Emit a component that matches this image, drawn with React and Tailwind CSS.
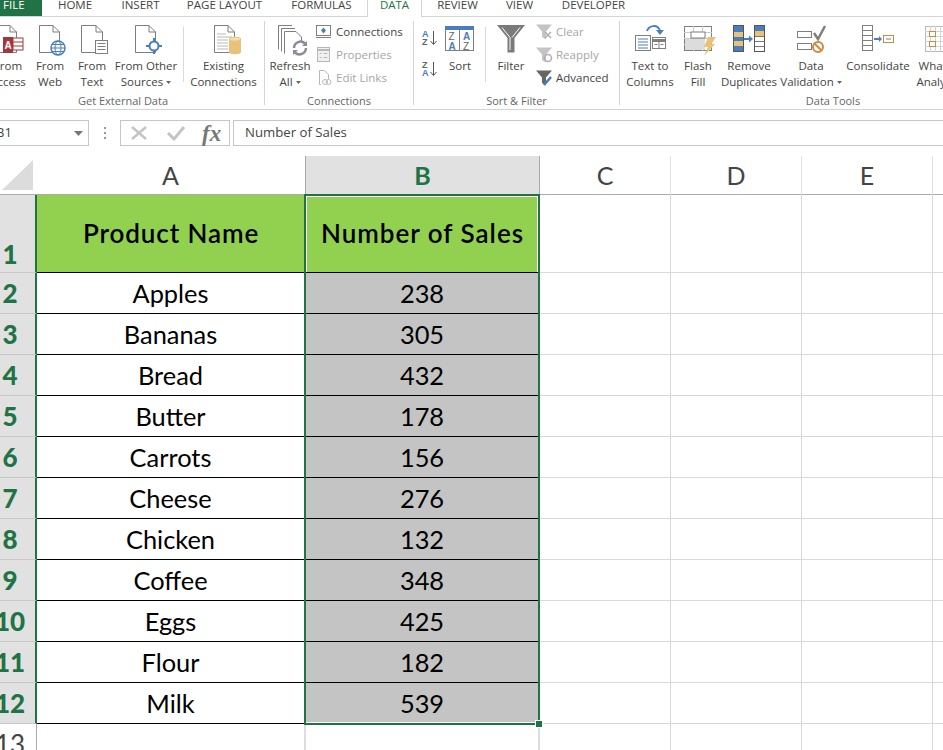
const BLUE = '#4a7ebb';
const GREY = '#7f7f7f';
const FAINT = '#b8b8b8';
const GOLD = '#e9c27a';
const ORANGE = '#d08a3e';

const TABS = [
  ['HOME', 'w-[66px]'],
  ['INSERT', 'w-[65px]'],
  ['PAGE LAYOUT', 'w-[103px]'],
  ['FORMULAS', 'w-[91px]'],
];
const TABS_AFTER = [
  ['REVIEW', 'w-[71px]'],
  ['VIEW', 'w-[53px]'],
  ['DEVELOPER', 'w-[95px]'],
];

const ROWS = [
  ['Apples', 238],
  ['Bananas', 305],
  ['Bread', 432],
  ['Butter', 178],
  ['Carrots', 156],
  ['Cheese', 276],
  ['Chicken', 132],
  ['Coffee', 348],
  ['Eggs', 425],
  ['Flour', 182],
  ['Milk', 539],
];

const GRID = 'grid grid-cols-[37px_269px_234px_131px_131px_131px_131px_131px]';
const cellFont = "[font-family:Lato,'Liberation_Sans',sans-serif]";

const Svg = ({ children, w = 44, h = 32 }) => (
  <svg width={w} height={h} viewBox={`0 0 ${w} ${h}`} fill="none" className="block shrink-0">
    {children}
  </svg>
);

const Doc = ({ x, w = 21, stroke = GREY }) => (
  <path
    d={`M${x + 0.5} 1.5H${x + w - 7}L${x + w - 0.5} 8V28.5H${x + 0.5}ZM${x + w - 7} 1.5V8H${x + w - 0.5}`}
    stroke={stroke}
    fill="#fff"
  />
);

const AccessIcon = () => (
  <Svg>
    <Doc x={12} w={19} />
    <rect x="17" y="13" width="10" height="16" fill="#a4373a" />
    <rect x="27" y="14" width="10" height="12" fill="#fff" stroke="#a4373a" />
    <path d="M27 18H37M27 22H37" stroke="#a4373a" />
    <text x="18.5" y="25" fontSize="10" fontWeight="700" fill="#fff" fontFamily="Liberation Sans">A</text>
  </Svg>
);

const WebIcon = () => (
  <Svg>
    <Doc x={11} />
    <circle cx="30" cy="24" r="7" fill="#fff" stroke={BLUE} strokeWidth="1.5" />
    <ellipse cx="30" cy="24" rx="3" ry="7" stroke={BLUE} />
    <path d="M23 24H37M24 20.5H36M24 27.5H36" stroke={BLUE} />
  </Svg>
);

const TextIcon = () => (
  <Svg>
    <Doc x={11} w={22} />
    <rect x="25.5" y="16.5" width="12" height="13" fill="#fff" stroke={GREY} />
    <path d="M27.5 19.5H35.5M27.5 22.5H35.5M27.5 25.5H35.5" stroke={GREY} />
  </Svg>
);

const OtherIcon = () => (
  <Svg>
    <Doc x={11} />
    <circle cx="30" cy="22" r="4.5" fill="#fff" stroke={BLUE} strokeWidth="2" />
    <path d="M30 14V17M30 27V30M22 22H25M35 22H38" stroke={BLUE} strokeWidth="2" />
  </Svg>
);

const ExistingIcon = () => (
  <Svg>
    <Doc x={12} />
    <path d="M15 10H24M15 13H30M15 16H26M15 19H26M15 22H26M15 25H26" stroke={FAINT} />
    <path d="M27 15C27 12 39 12 39 15V28C39 31 27 31 27 28Z" fill={GOLD} />
    <ellipse cx="33" cy="15" rx="5" ry="1.5" fill="#f4dfb4" />
  </Svg>
);

const RefreshIcon = () => (
  <Svg>
    <path d="M10.5 25.5V1.5H24" stroke={GREY} />
    <path d="M13.5 27.5V4.5H27" stroke={GREY} />
    <path d="M16.5 29.5V7.5H28L33.5 13V18" stroke={GREY} fill="#fff" />
    <path d="M26 24A6.5 6.5 0 0 1 37 19.5" stroke="#8b8b9b" strokeWidth="2.5" />
    <path d="M38 24A6.5 6.5 0 0 1 27 28.5" stroke="#8b8b9b" strokeWidth="2.5" />
    <path d="M34 22H39V17ZM30 26H25V31Z" fill="#8b8b9b" />
  </Svg>
);

const ConnectionsIcon = () => (
  <Svg w={16} h={16}>
    <rect x="0.5" y="1.5" width="14" height="10" fill="#fff" stroke={GREY} />
    <path d="M0 13.5H15" stroke={GREY} />
    <path d="M7.5 3.5L10 6.5L7.5 9.5L5 6.5Z" fill={BLUE} />
  </Svg>
);

const PropertiesIcon = () => (
  <Svg w={16} h={16}>
    <rect x="1.5" y="0.5" width="12" height="14" fill="#f1f1f1" stroke={FAINT} />
    <path d="M1.5 3H13.5" stroke={FAINT} strokeWidth="2" />
    <path d="M3.5 6.5H5.5M7.5 6.5H11.5M3.5 10.5H5.5M7.5 10.5H11.5" stroke={FAINT} />
  </Svg>
);

const EditLinksIcon = () => (
  <Svg w={16} h={16}>
    <path d="M3.5 0.5H8.5L12.5 4.5V9M5 14.5H3.5V0.5" stroke={FAINT} />
    <circle cx="9" cy="12" r="2.5" stroke={FAINT} />
    <circle cx="12.5" cy="12" r="2.5" stroke={FAINT} />
  </Svg>
);

const SortSmall = ({ top, bottom, topFill, bottomFill }) => (
  <Svg w={16} h={16}>
    <text x="0" y="7" fontSize="9" fontWeight="700" fill={topFill} fontFamily="Liberation Sans">{top}</text>
    <text x="0" y="15" fontSize="9" fontWeight="700" fill={bottomFill} fontFamily="Liberation Sans">{bottom}</text>
    <path d="M11.5 1V14M8.5 11L11.5 14.5L14.5 11" stroke="#555" />
  </Svg>
);

const SortBig = () => (
  <Svg w={30} h={26}>
    <rect x="0.5" y="3.5" width="28" height="21" fill="#fff" stroke={GREY} />
    <rect x="0" y="0" width="29" height="4" fill={BLUE} />
    <path d="M14.5 4V25" stroke={GREY} />
    <text x="3.5" y="13.5" fontSize="10" fill="#666" fontFamily="Liberation Sans">Z</text>
    <text x="3.5" y="23.5" fontSize="10" fontWeight="700" fill={BLUE} fontFamily="Liberation Sans">A</text>
    <text x="18" y="13.5" fontSize="10" fontWeight="700" fill={BLUE} fontFamily="Liberation Sans">A</text>
    <text x="18" y="23.5" fontSize="10" fill="#666" fontFamily="Liberation Sans">Z</text>
  </Svg>
);

const FilterBig = () => (
  <Svg w={28} h={28}>
    <path d="M0 0H28L17.5 13V27.5H10.5V13Z" fill="#7a7a7a" />
    <path d="M5 2.5L13 12.5V25M23 2.5L15 12.5" stroke="#fff" />
  </Svg>
);

const FilterSmall = ({ fill, children }) => (
  <Svg w={18} h={16}>
    <path d="M0 0.5H16L10 7.5V15.5L6 13V7.5Z" fill={fill} />
    {children}
  </Svg>
);

const TextColumnsIcon = () => (
  <Svg>
    <rect x="7.5" y="11.5" width="15" height="15" fill="#fff" stroke={GREY} />
    <path d="M10 15H20M10 18H20M10 21H20M10 24H20" stroke={BLUE} />
    <rect x="24.5" y="13.5" width="13" height="11" fill="#fff" stroke={GREY} />
    <path d="M24 16.5H38" stroke={GREY} strokeWidth="3" />
    <path d="M31 17V24M26.5 20.5H29.5M32.5 20.5H35.5" stroke={GREY} />
    <path d="M19 7C21 1 30 0 32 7" stroke={BLUE} strokeWidth="2" />
    <path d="M28 6H36L32 11Z" fill={BLUE} />
  </Svg>
);

const FlashIcon = () => (
  <Svg>
    <rect x="8.5" y="2.5" width="27" height="24" fill="#fff" stroke={GREY} />
    <path d="M8 8.5H36M8 14.5H36M8 20.5H36M17.5 2V27M26.5 2V27" stroke="#c9c9c9" />
    <rect x="15" y="8" width="14" height="6" fill="#fff" stroke={GREY} />
    <rect x="9" y="15" width="20" height="11" fill="#dcdcdc" />
    <path d="M32 13H40L35.5 20H39L28 32L32 23H28Z" fill={GOLD} />
  </Svg>
);

const DuplicatesIcon = () => (
  <Svg>
    <rect x="6.5" y="1.5" width="10" height="26" fill={BLUE} stroke="#555" />
    <path d="M7 8H16V13H7ZM7 17H16V22H7Z" fill={GOLD} />
    <path d="M17 15H23" stroke={BLUE} strokeWidth="2" />
    <path d="M22 11.5L26 15L22 18.5Z" fill={BLUE} />
    <rect x="27.5" y="1.5" width="10" height="26" fill="#fff" stroke="#555" />
    <rect x="28" y="2" width="9" height="5" fill={BLUE} />
    <rect x="28" y="7" width="9" height="5" fill={GOLD} />
    <path d="M28 12.5H37M28 17.5H37M28 22.5H37" stroke="#777" />
  </Svg>
);

const ValidationIcon = () => (
  <Svg>
    <rect x="8.5" y="7.5" width="14" height="6" fill="#fff" stroke={GREY} />
    <rect x="8.5" y="19.5" width="14" height="6" fill="#fff" stroke={GREY} />
    <path d="M25 9L29 15L36 2" stroke={GREY} strokeWidth="2.5" />
    <circle cx="29" cy="23" r="5" fill="#fff" stroke={ORANGE} strokeWidth="2" />
    <path d="M25.5 19.5L32.5 26.5" stroke={ORANGE} strokeWidth="2" />
  </Svg>
);

const ConsolidateIcon = () => (
  <Svg>
    <rect x="6.5" y="1.5" width="10" height="25" fill="#fff" stroke={GREY} />
    <path d="M7 6.5H16M7 11.5H16M7 16.5H16M7 21.5H16" stroke={GREY} />
    <path d="M18 15H24" stroke={BLUE} strokeWidth="2" />
    <path d="M23 12L26 15L23 18Z" fill={BLUE} />
    <rect x="27.5" y="11.5" width="10" height="7" fill="#fff" stroke={ORANGE} />
    <path d="M30 15H35" stroke={GREY} />
  </Svg>
);

const WhatIfIcon = () => (
  <Svg>
    <rect x="9.5" y="2.5" width="24" height="25" fill="#fff" stroke={FAINT} />
    <path d="M14.5 2V28M19.5 2V28M24.5 2V28M29.5 2V28M9 7.5H34M9 12.5H34M9 17.5H34M9 22.5H34" stroke="#d4d4d4" />
    <rect x="13.5" y="7.5" width="6" height="5" fill="#fff" stroke={ORANGE} />
    <rect x="13.5" y="17.5" width="6" height="5" fill="#fff" stroke={ORANGE} />
  </Svg>
);

const Caret = () => (
  <svg width="5" height="3" viewBox="0 0 5 3" className="ml-[3px] inline-block align-middle">
    <path d="M0 0H5L2.5 3Z" fill="#666" />
  </svg>
);

const BigButton = ({ icon, lines, width, caret }) => (
  <div className={`flex flex-col items-center shrink-0 ${width}`}>
    <div className="h-[32px] mb-[2px] flex justify-center">{icon}</div>
    {lines.map((line, i) => (
      <div key={line} className="h-4 leading-4 whitespace-nowrap">
        {line}
        {caret && i === lines.length - 1 && <Caret />}
      </div>
    ))}
  </div>
);

const SmallRow = ({ icon, label, muted }) => (
  <div className={`h-[23px] flex items-center gap-[3px] whitespace-nowrap ${muted ? 'text-[#a6a6a6]' : ''}`}>
    <div className="w-[17px] shrink-0">{icon}</div>
    {label}
  </div>
);

const Group = ({ label, className, children }) => (
  <div className={`flex flex-col justify-between h-[92px] shrink-0 ${className}`}>
    <div className="flex pt-[7px]">{children}</div>
    <div className="h-4 leading-4 text-center text-[11px] text-[#666]">{label}</div>
  </div>
);

const Separator = () => <div className="w-px h-[84px] mt-[4px] bg-[#d4d4d4] shrink-0" />;

const Ribbon = () => (
  <div className="flex h-[92px] -ml-[18px] border-b border-[#d4d4d4] box-content text-[#444] text-[11.5px]">
    <Group label="Get External Data" className="w-[282px]">
      <BigButton icon={<AccessIcon />} lines={['From', 'Access']} width="w-[52px]" />
      <BigButton icon={<WebIcon />} lines={['From', 'Web']} width="w-[32px]" />
      <BigButton icon={<TextIcon />} lines={['From', 'Text']} width="w-[52px]" />
      <BigButton icon={<OtherIcon />} lines={['From Other', 'Sources']} width="w-[56px]" caret />
      <div className="w-px h-[55px] ml-[9px] mt-[3px] bg-[#d9d9d9] shrink-0" />
      <BigButton icon={<ExistingIcon />} lines={['Existing', 'Connections']} width="w-[79px]" />
    </Group>
    <Separator />
    <Group label="Connections" className="w-[148px]">
      <BigButton icon={<RefreshIcon />} lines={['Refresh', 'All']} width="w-[50px]" caret />
      <div className="flex flex-col -mt-[4px] ml-[1px]">
        <SmallRow icon={<ConnectionsIcon />} label="Connections" />
        <SmallRow icon={<PropertiesIcon />} label="Properties" muted />
        <SmallRow icon={<EditLinksIcon />} label="Edit Links" muted />
      </div>
    </Group>
    <Separator />
    <Group label="Sort & Filter" className="w-[205px]">
      <div className="flex flex-col gap-[15px] ml-[8px] pt-[6px] w-[23px] shrink-0">
        <SortSmall top="A" bottom="Z" topFill={BLUE} bottomFill="#666" />
        <SortSmall top="Z" bottom="A" topFill="#666" bottomFill={BLUE} />
      </div>
      <div className="flex flex-col items-center w-[30px] shrink-0">
        <div className="h-[32px] mb-[2px] pt-[2px]"><SortBig /></div>
        <div className="h-4 leading-4">Sort</div>
      </div>
      <div className="w-px h-[55px] ml-[10px] mt-[3px] bg-[#d9d9d9] shrink-0" />
      <div className="flex flex-col items-center w-[50px] shrink-0">
        <div className="h-[32px] mb-[2px] pt-[1px]"><FilterBig /></div>
        <div className="h-4 leading-4">Filter</div>
      </div>
      <div className="flex flex-col -mt-[4px]">
        <SmallRow icon={<FilterSmall fill="#c4c4c4"><path d="M9 8L15 14M15 8L9 14" stroke="#b0b0b0" strokeWidth="1.5" /></FilterSmall>} label="Clear" muted />
        <SmallRow icon={<FilterSmall fill="#c4c4c4"><circle cx="12" cy="11" r="3.5" stroke="#b0b0b0" strokeWidth="1.5" /></FilterSmall>} label="Reapply" muted />
        <SmallRow icon={<FilterSmall fill="#666"><path d="M8 15L15 7" stroke={BLUE} strokeWidth="2.5" /></FilterSmall>} label="Advanced" />
      </div>
    </Group>
    <Separator />
    <Group label="Data Tools" className="w-[426px]">
      <BigButton icon={<TextColumnsIcon />} lines={['Text to', 'Columns']} width="w-[60px]" />
      <BigButton icon={<FlashIcon />} lines={['Flash', 'Fill']} width="w-[36px]" />
      <BigButton icon={<DuplicatesIcon />} lines={['Remove', 'Duplicates']} width="w-[66px]" />
      <BigButton icon={<ValidationIcon />} lines={['Data', 'Validation']} width="w-[58px]" caret />
      <BigButton icon={<ConsolidateIcon />} lines={['Consolidate']} width="w-[76px]" />
      <BigButton icon={<WhatIfIcon />} lines={['What-If', 'Analysis']} width="w-[44px]" />
    </Group>
  </div>
);

const TabBar = () => (
  <div className="flex h-[17px] border-b border-[#d4d4d4] text-[#444] text-[11.5px] leading-[10px]">
    <div className="w-[42px] pl-[3px] bg-[#217346] text-white">FILE</div>
    {TABS.map(([name, width]) => (
      <div key={name} className={`${width} text-center`}>{name}</div>
    ))}
    <div className="w-[55px] h-[17px] text-center text-[#217346] bg-white border-x border-[#d4d4d4]">DATA</div>
    {TABS_AFTER.map(([name, width]) => (
      <div key={name} className={`${width} text-center`}>{name}</div>
    ))}
  </div>
);

const FormulaBar = () => (
  <div className="flex items-stretch h-[26px] mt-[10px] text-[#444]">
    <div className="flex items-center justify-between w-[90px] -ml-[1px] pr-[5px] border border-[#c6c6c6] text-[13px]">
      <span className="-ml-[4px]">B1</span>
      <svg width="9" height="5" viewBox="0 0 9 5"><path d="M0 0H9L4.5 5Z" fill="#777" /></svg>
    </div>
    <div className="w-[31px] flex flex-col items-center justify-center gap-[3px]">
      <span className="w-[2px] h-[2px] bg-[#999]" />
      <span className="w-[2px] h-[2px] bg-[#999]" />
      <span className="w-[2px] h-[2px] bg-[#999]" />
    </div>
    <div className="flex items-center w-[110px] pl-[9px] border border-[#c6c6c6]">
      <svg width="18" height="16" viewBox="0 0 18 16" fill="none"><path d="M2 2L16 14M16 2L2 14" stroke="#c4c4c4" strokeWidth="2.5" /></svg>
      <svg width="20" height="16" viewBox="0 0 20 16" fill="none" className="ml-[18px]"><path d="M2 8L8 14L18 2" stroke="#c4c4c4" strokeWidth="3" /></svg>
      <span className="ml-[16px] [font-family:'Liberation_Serif',serif] italic font-bold text-[23px] leading-none text-[#777]">fx</span>
    </div>
    <div className="flex items-center flex-1 ml-[3px] pl-[11px] border-y border-l border-[#c6c6c6] text-[13.2px]">
      Number of Sales
    </div>
  </div>
);

const ColumnHeader = () => (
  <div className={`${GRID} h-[39px] border-b border-[#ababab] text-[25px] leading-[39px] text-[#444] text-center ${cellFont}`}>
    <div>
      <svg width="36" height="38" viewBox="0 0 36 38" className="block"><path d="M2 34L33 4V34Z" fill="#dcdcdc" /></svg>
    </div>
    <div className="border-r border-[#ababab] pr-[1px]">A</div>
    <div className="bg-[#e1e1e1] border-r border-[#ababab] font-bold text-[#217346]">B</div>
    {['C', 'D', 'E', ''].map((col) => (
      <div key={col} className="border-r border-[#e1e1e1]">{col}</div>
    ))}
    <div />
  </div>
);

const RowHeader = ({ n, tall }) => (
  <div className={`flex bg-[#e1e1e1] border-r-2 border-b border-[#217346] border-b-[#c8c8c8] ${tall ? 'items-end' : 'items-center'}`}>
    <span className="w-[52px] -ml-[16px] shrink-0 text-center text-[26px] leading-[36px] font-black text-[#217346]">{n}</span>
  </div>
);

const EmptyCells = () => (
  <>
    {[0, 1, 2, 3, 4].map((i) => (
      <div key={i} className="border-r border-b border-[#d9d9d9]" />
    ))}
  </>
);

const Sheet = () => (
  <div className={`relative ${cellFont} text-black`}>
    <ColumnHeader />
    <div className={`${GRID} h-[78px]`}>
      <RowHeader n={1} tall />
      <div className="flex items-center justify-center pr-[1px] bg-[#92d050] border-b border-black text-[26px] font-semibold tracking-[0.9px]">Product Name</div>
      <div className="flex items-center justify-center pr-[1px] bg-[#92d050] border-b border-black text-[26px] font-semibold tracking-[1px]">Number of Sales</div>
      <EmptyCells />
    </div>
    {ROWS.map(([name, sales], i) => (
      <div key={name} className={`${GRID} h-[41px]`}>
        <RowHeader n={i + 2} />
        <div className="flex items-center justify-center pr-[2px] border-b border-black text-[25.4px]">{name}</div>
        <div className="flex items-center justify-center pr-[2px] bg-[#c4c4c4] border-b border-black text-[25.4px]">{sales}</div>
        <EmptyCells />
      </div>
    ))}
    <div className={`${GRID} h-[41px]`}>
      <div className="flex items-center border-r border-[#ababab]">
        <span className="w-[52px] -ml-[16px] shrink-0 text-center text-[26px] text-[#444]">13</span>
      </div>
      <div className="border-r-2 border-b border-r-[#dcdce4] border-b-[#d9d9d9]" />
      <div className="border-r-2 border-b border-r-[#dcdce4] border-b-[#d9d9d9]" />
      <EmptyCells />
    </div>
    <div className="absolute left-[304px] top-[38px] w-[236px] h-[531px] border-2 border-[#217346] pointer-events-none">
      <div className="absolute inset-x-0 top-0 h-[76px] border-x border-t border-white" />
      <div className="absolute inset-x-0 bottom-0 h-px bg-white" />
      <div className="absolute -right-[4px] -bottom-[4px] w-[6px] h-[6px] bg-[#217346] outline outline-white" />
    </div>
  </div>
);

export default function App() {
  return (
    <div className="w-[943px] h-[750px] overflow-hidden bg-white [font-family:'Open_Sans',sans-serif]">
      <TabBar />
      <Ribbon />
      <FormulaBar />
      <div className="h-[10px]" />
      <Sheet />
    </div>
  );
}
